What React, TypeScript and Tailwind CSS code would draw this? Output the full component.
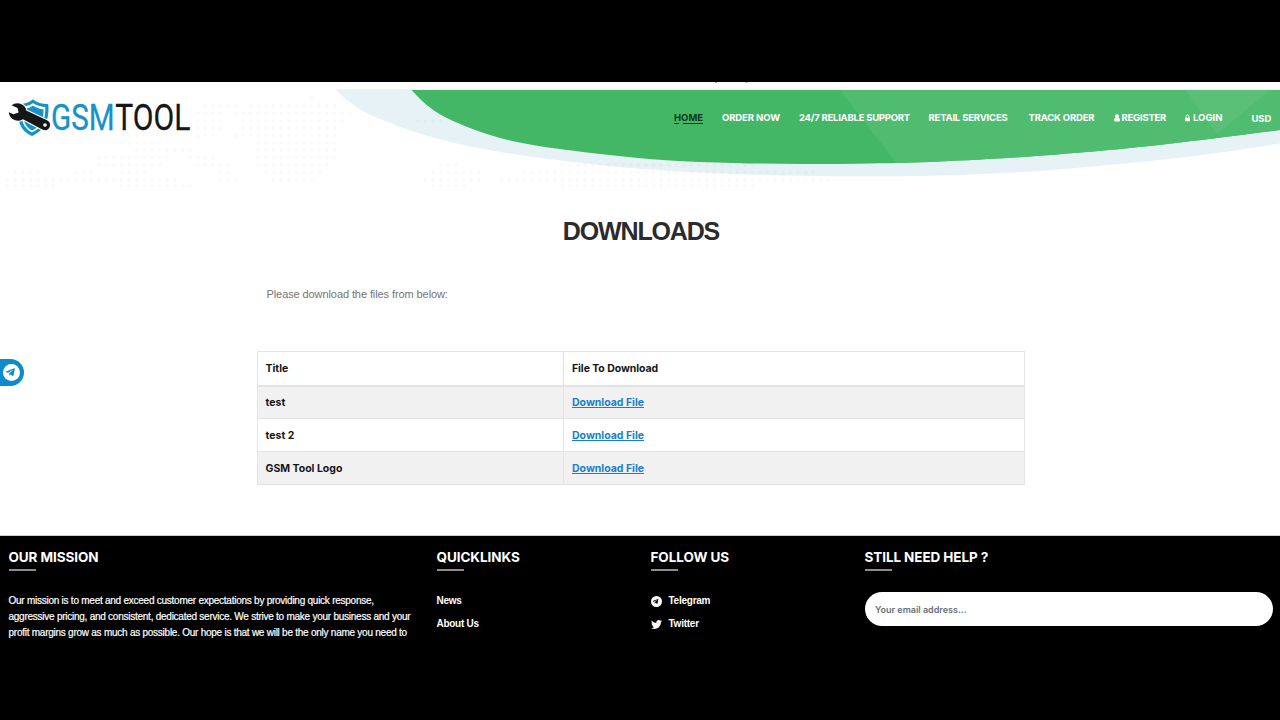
import { FaTelegramPlane, FaTwitter } from "react-icons/fa";

type Point = [number, number];

const GREEN_EDGE: Point[] = [
  [411.5, 8], [428, 24], [450, 37.5], [490, 53], [533, 63], [600, 72], [666, 78.2],
  [733, 80.9], [800, 82], [870, 81.5], [940, 79.5], [1030, 74.5], [1130, 66], [1213, 56.5], [1280, 48],
];

const PALE_EDGE: Point[] = [
  [336, 8], [355, 24], [380, 37], [433, 55.5], [500, 70], [600, 83], [666, 88.5],
  [733, 92], [800, 93.8], [867, 94.3], [940, 93.5], [1030, 89.5], [1130, 81], [1213, 71.5], [1280, 61.5],
];

function curve(points: Point[]) {
  let d = `M${points[0][0]} ${points[0][1]}`;
  for (let i = 0; i < points.length - 1; i++) {
    const p0 = points[Math.max(i - 1, 0)];
    const p1 = points[i];
    const p2 = points[i + 1];
    const p3 = points[Math.min(i + 2, points.length - 1)];
    d += `C${p1[0] + (p2[0] - p0[0]) / 6} ${p1[1] + (p2[1] - p0[1]) / 6} ${p2[0] - (p3[0] - p1[0]) / 6} ${p2[1] - (p3[1] - p1[1]) / 6} ${p2[0]} ${p2[1]}`;
  }
  return `${d}V8Z`;
}

// Runs of map dots: [row y, first x, last x]
const DOT_RUNS: [number, number, number][] = [
  [16, 305, 318], [24, 200, 242], [24, 250, 336], [31.5, 195, 226], [31.5, 235, 352],
  [39, 195, 226], [39, 240, 346], [39, 418, 445], [46, 195, 226], [46, 240, 342],
  [53.5, 195, 216], [53.5, 230, 342], [53.5, 120, 170], [61, 110, 160], [61, 255, 342],
  [68, 130, 190], [68, 255, 340], [75.5, 97, 172], [75.5, 190, 214], [75.5, 258, 340],
  [83, 95, 165], [83, 192, 230], [83, 258, 334], [83, 440, 462], [83, 560, 760],
  [90.5, 8, 38], [90.5, 70, 92], [90.5, 120, 145], [90.5, 215, 230], [90.5, 265, 320],
  [90.5, 430, 482], [90.5, 520, 815], [98, 5, 182], [98, 215, 242], [98, 267, 313],
  [98, 425, 486], [98, 498, 830], [104, 5, 60], [104, 120, 190], [104, 430, 470], [104, 560, 760],
];

const DOTS = DOT_RUNS.flatMap(([y, from, to]) => {
  const row: Point[] = [];
  for (let x = Math.ceil(from / 7.6) * 7.6; x <= to; x += 7.6) row.push([x, y]);
  return row;
});

function HeaderArt() {
  return (
    <svg className="absolute inset-0" width="1280" height="105" viewBox="0 0 1280 105">
      <defs>
        <clipPath id="green-shape">
          <path d={curve(GREEN_EDGE)} />
        </clipPath>
      </defs>
      <path d={curve(PALE_EDGE)} fill="#e6f2f5" />
      {DOTS.map(([x, y], i) => (
        <circle key={i} cx={x} cy={y} r="2" fill="#64648c" fillOpacity="0.032" />
      ))}
      <g clipPath="url(#green-shape)">
        <rect width="1280" height="105" fill="#44b766" />
        <path d="M840 8L898 83H1280V8Z" fill="#50bc70" />
        <path d="M1186 8L1217 52L1270 8Z" fill="#5bc077" />
        <path d="M1217 52L1205 62H1224Z" fill="#44b766" fillOpacity="0.5" />
      </g>
      <path d="M336 7.5H1280" stroke="#e9f5ee" strokeWidth="1" />
      <path d="M715 0.5H717M745.5 0.5H747.5" stroke="#a5a5a5" strokeWidth="1" />
    </svg>
  );
}

function Logo() {
  return (
    <svg className="relative" width="200" height="105" viewBox="0 82 200 105">
      <path
        d="M33 101.200C37 104 42 105.400 46.800 105.700C47.600 118 44 129 32 134.200C22 130 19.600 120 19.800 112V105.700C24.500 105.400 29 104 33 101.200Z"
        fill="#ffffff"
        stroke="#1592c8"
        strokeWidth="3.2"
      />
      <path
        d="M33 105.400C36 107.600 39.500 108.900 43.500 109.200C43.800 118.500 40.500 126.500 32 130.600C25.500 127 23.400 121 23.200 116V109.200C27 108.900 30.200 107.600 33 105.400Z"
        fill="#1592c8"
      />
      <path
        d="M11.500 105.200Q16 102.200 21 104Q26 106.200 26.200 110.500L47 120.200A5 5 0 0 1 42.800 129.800L23 119.300Q17.500 122.500 12.500 119Q9.300 117 8.800 112.300L13.500 114.200L18.600 112.500L17.600 108.100Z"
        fill="#161616"
        stroke="#ffffff"
        strokeWidth="2.200"
        strokeLinejoin="round"
        paintOrder="stroke"
      />
      <circle cx="45" cy="125" r="1.800" fill="#ffffff" />
      <text transform="translate(51 130.300) scale(0.81 1)" fontSize="36.500" fill="#1592c8" stroke="#1592c8" strokeWidth="0.3" className="font-[Roboto]">
        GSM
      </text>
      <text transform="translate(115.300 130.300) scale(0.825 1)" fontSize="36.500" fill="#161616" stroke="#161616" strokeWidth="0.3" className="font-[Roboto]">
        TOOL
      </text>
    </svg>
  );
}

function UserGlyph() {
  return (
    <svg width="6" height="8" viewBox="0 0 6 8" fill="currentColor">
      <circle cx="3" cy="2.200" r="1.900" />
      <path d="M1.200 3.400Q3 5 4.800 3.400Q6 4.300 6 6.400Q6 7.500 5 7.500H1Q0 7.500 0 6.400Q0 4.300 1.200 3.400Z" />
    </svg>
  );
}

function LockGlyph() {
  return (
    <svg width="5" height="8" viewBox="0 0 5 8">
      <path d="M1.100 4V2.500A1.400 1.500 0 0 1 3.900 2.500V4" fill="none" stroke="currentColor" strokeWidth="0.900" />
      <rect y="3.700" width="5" height="3.600" rx="0.400" fill="currentColor" />
    </svg>
  );
}

function Header() {
  return (
    <header className="relative flex h-[105px] shrink-0">
      <HeaderArt />
      <div className="h-full w-[674px]">
        <Logo />
      </div>
      <nav className="relative flex items-start whitespace-nowrap pt-[27.5px] text-[9.5px] leading-4 font-bold text-white">
        <a className="w-12 text-[#12351d]">
          HOME
          <span className="-mt-[2.5px] flex gap-1">
            <span className="h-px w-[5px] bg-[#12351d]" />
            <span className="h-px w-5 bg-[#12351d]" />
          </span>
        </a>
        <a className="w-[77px] tracking-[-0.1px]">ORDER NOW</a>
        <a className="w-[129.5px] tracking-[-0.24px]">24/7 RELIABLE SUPPORT</a>
        <a className="w-[100px] tracking-[-0.18px]">RETAIL SERVICES</a>
        <a className="w-[85px] tracking-[-0.17px]">TRACK ORDER</a>
        <a className="flex w-[71.5px] items-center gap-[2px] tracking-[-0.23px]">
          <UserGlyph />
          REGISTER
        </a>
        <a className="flex w-[66.5px] items-center gap-[3px]">
          <LockGlyph />
          LOGIN
        </a>
        <a className="pt-px tracking-[-0.1px]">USD</a>
      </nav>
    </header>
  );
}

const FILES = ["test", "test 2", "GSM Tool Logo"];

function Downloads() {
  return (
    <main className="flex-1">
      <h1 className="mt-[28px] pl-[2px] text-center font-['Liberation_Sans'] text-[25px] leading-8 font-bold tracking-[-1.15px] text-[#2b2b2b]">
        DOWNLOADS
      </h1>
      <p className="mt-[37px] ml-[266.5px] font-['Liberation_Sans'] text-[11px] leading-5 tracking-[-0.09px] text-[#747474]">
        Please download the files from below:
      </p>
      <table className="mt-[47px] ml-[257px] w-[768px] table-fixed border-collapse border border-[#e3e5e7] text-left text-[10.5px] leading-4 text-[#151515]">
        <thead>
          <tr className="h-[34px] border-b-2 border-[#e1e3e5]">
            <th className="w-[306px] border-r border-[#e3e5e7] pt-[2px] pl-[7.5px] font-bold">Title</th>
            <th className="pt-[2px] pl-2 font-bold tracking-[-0.07px]">File To Download</th>
          </tr>
        </thead>
        <tbody>
          {FILES.map((name) => (
            <tr key={name} className="h-[33px] border-b border-[#e3e5e7] odd:bg-[#f1f1f1]">
              <td className="border-r border-[#e3e5e7] pt-[2px] pl-[7.5px] font-bold">{name}</td>
              <td className="pt-[2px] pl-2 font-bold">
                <a className="text-[#1580d3] underline">Download File</a>
              </td>
            </tr>
          ))}
        </tbody>
      </table>
    </main>
  );
}

function FooterHeading({ children }: { children: string }) {
  return (
    <>
      <h2 className="pt-[11px] text-[13.5px] leading-5 font-bold tracking-[-0.08px] whitespace-nowrap">{children}</h2>
      <div className="mt-[2px] h-[2px] w-[27px] bg-[#8c8c8c]" />
    </>
  );
}

function TelegramBadge({ className }: { className: string }) {
  return (
    <span className={`flex items-center justify-center rounded-full bg-white ${className}`}>
      <FaTelegramPlane className="-ml-px size-[62%]" />
    </span>
  );
}

function Footer() {
  return (
    <footer className="flex h-[110px] shrink-0 border-t border-[#c5d0c5] bg-black pl-[8.5px] text-white">
      <section className="w-[428px]">
        <FooterHeading>OUR MISSION</FooterHeading>
        <p className="mt-[22px] font-['Liberation_Sans'] text-[10px] leading-4 tracking-[-0.25px] whitespace-nowrap [-webkit-text-stroke:0.2px_white]">
          Our mission is to meet and exceed customer expectations by providing quick response,
          <br />
          aggressive pricing, and consistent, dedicated service. We strive to make your business and your
          <br />
          profit margins grow as much as possible. Our hope is that we will be the only name you need to
        </p>
      </section>
      <section className="w-[214px]">
        <FooterHeading>QUICKLINKS</FooterHeading>
        <ul className="mt-[22px] flex flex-col gap-[7px] font-['Liberation_Sans'] text-[10px] leading-4 font-bold tracking-[-0.28px]">
          <li>News</li>
          <li>About Us</li>
        </ul>
      </section>
      <section className="w-[214px]">
        <FooterHeading>FOLLOW US</FooterHeading>
        <ul className="mt-[22px] flex flex-col gap-[7px] font-['Liberation_Sans'] text-[10px] leading-4 font-bold tracking-[-0.25px]">
          <li className="flex items-center gap-[7px]">
            <TelegramBadge className="size-[11px] text-black" />
            Telegram
          </li>
          <li className="flex items-center gap-[7px]">
            <FaTwitter className="size-[11px]" />
            Twitter
          </li>
        </ul>
      </section>
      <section className="w-[408px]">
        <FooterHeading>STILL NEED HELP ?</FooterHeading>
        <div className="mt-[21px] flex h-[34px] items-center rounded-full bg-white pt-px pl-[10.5px] text-[9px] font-semibold text-[#66707a]">
          Your email address...
        </div>
      </section>
    </footer>
  );
}

export default function App() {
  return (
    <div className="flex h-[720px] w-[1280px] flex-col overflow-hidden bg-black pt-[82px] pb-[75px] font-['Inter',sans-serif]">
      <div className="relative flex h-[563px] flex-col bg-white">
        <Header />
        <Downloads />
        <Footer />
        <div className="absolute top-[277px] left-0 flex h-[27px] w-6 items-center rounded-r-full bg-[#0d8bcb] pl-[2.5px]">
          <TelegramBadge className="size-[17px] text-[#0d8bcb]" />
        </div>
      </div>
    </div>
  );
}
